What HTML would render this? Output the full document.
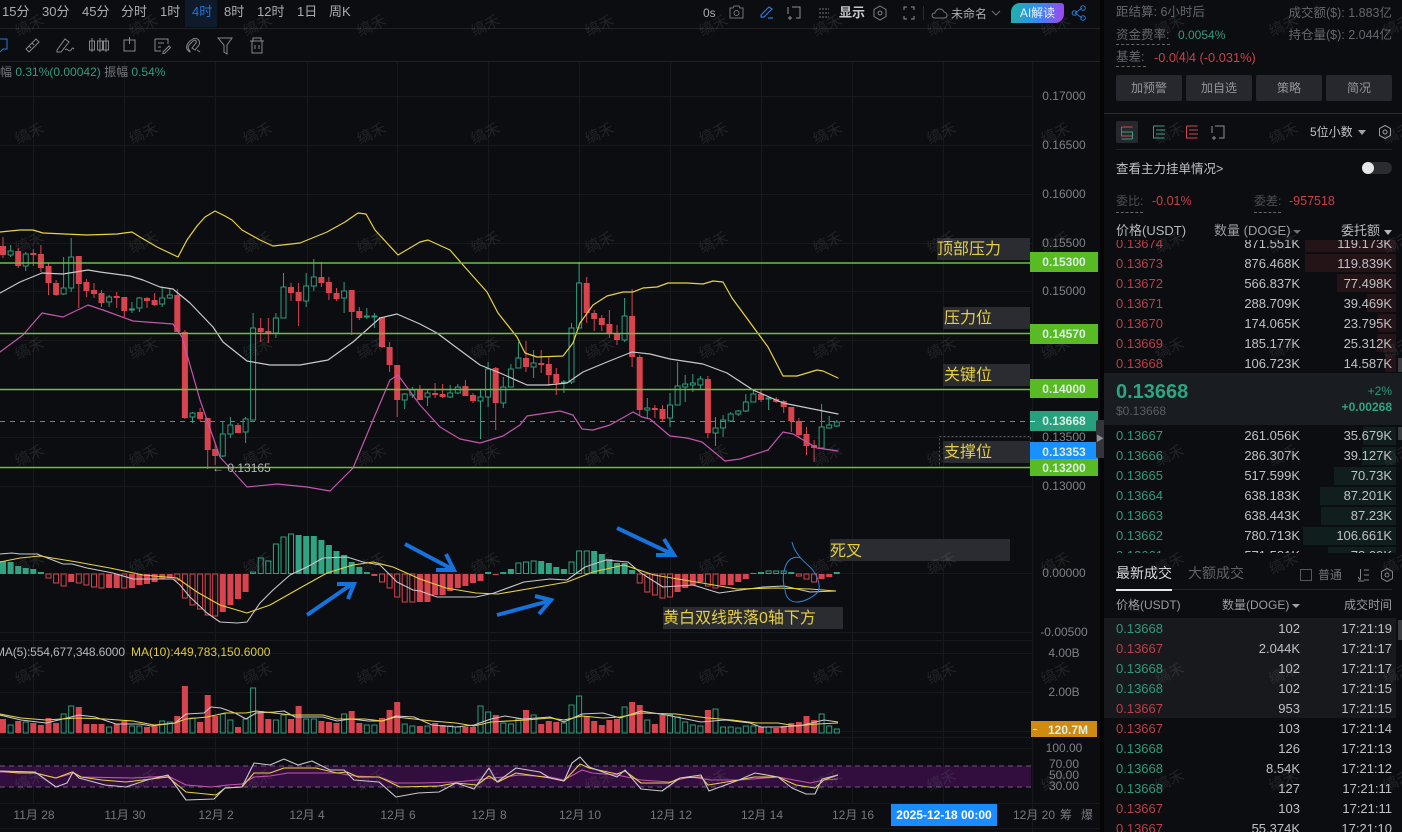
<!DOCTYPE html>
<html lang="zh"><head><meta charset="utf-8"><title>DOGE</title>
<style>
*{box-sizing:border-box}
html,body{margin:0;padding:0;background:#0c0d10}
body{width:1402px;height:832px;overflow:hidden;position:relative;font-family:"Liberation Sans","Noto Sans CJK SC",sans-serif;color:#a8abb0;font-size:12px}
.a{position:absolute;white-space:nowrap}
.tf{position:absolute;top:3px;font-size:13px;line-height:18px;color:#a9acb1}
.btn{position:absolute;top:75px;width:66px;height:26px;background:#26282d;border-radius:2px;text-align:center;line-height:27px;color:#92959a;font-size:12px}
.box{position:absolute;overflow:hidden;left:1104px;width:292px}
.row{position:absolute;left:12px;width:276px;height:20px;line-height:20px;font-size:13px;color:#bfc2c6}
.row span{position:absolute;top:1px}
.p{left:0}.q{right:92px}.t{right:0}
.g{color:#2f9a7c}.r{color:#b9404a}
.bar{position:absolute;right:0;height:18px}
.bg{background:rgba(47,157,126,.13)}.br{background:rgba(217,68,77,.12)}
.wm{position:absolute;left:15px;display:flex;pointer-events:none}
.wm span{display:block;width:114px;font-size:15px;line-height:16px;color:rgba(140,140,145,.17);transform-origin:14px 8px;transform:rotate(-25deg)}
.dash{position:absolute;height:0;border-top:1px dashed #666}
.lb{font-size:12.5px;line-height:15px;color:#64676c}
</style></head><body>

<svg class="a" style="left:0;top:0" width="1100" height="832" viewBox="0 0 1100 832" font-family="Liberation Sans, Noto Sans CJK SC, sans-serif">
<rect width="1100" height="832" fill="#0c0d10"/>
<path d="M0 28.5H1100M0 61.5H1100" stroke="#1f2125"/>
<!-- grid -->
<path d="M33.5 62V804M124.5 62V804M215.5 62V804M307.5 62V804M397.5 62V804M488.5 62V804M579.5 62V804M670.5 62V804M761.5 62V804M852.5 62V804M943.5 62V804M1032.5 62V832M0 96.5H1032M0 145.5H1032M0 194.5H1032M0 243.5H1032M0 291.5H1032M0 340.5H1032M0 389.5H1032M0 437.5H1032M0 486.5H1032M0 573.5H1032M0 632.5H1032M0 640.5H1032M0 653.5H1032M0 692.5H1032M0 731.5H1032M0 737.5H1032M0 748.5H1032M0 803.5H1100" stroke="#17191c" fill="none"/>

<!-- label boxes -->
<g fill="#2b2c31">
<rect x="937" y="238" width="93" height="22"/><rect x="943" y="307" width="87" height="22"/><rect x="943" y="364" width="87" height="22"/><rect x="943" y="441" width="87" height="22"/><rect x="830" y="539" width="180" height="22"/><rect x="663" y="607" width="180" height="22"/>
</g>
<rect x="939.5" y="436.5" width="91" height="31" fill="none" stroke="#55575c" stroke-dasharray="2 2"/>

<!-- candle wicks -->
<g fill="none" stroke-width="1">
<path stroke="#d9434e" d="M3 237V258M18.2 248V268M33.3 249V266M40.9 245V272M48.5 263V295M56.1 280V296M78.8 256V308M86.4 279V297M94 283V298M101.5 290V307M116.7 292V308M124.3 297V317M147 297V308M154.6 293V306M177.3 289V332M184.9 330V419M200.1 408V421M207.7 418V469M215.2 443V465M238 423V433M260.7 318V342M268.3 318V343M291 283V301M298.6 283V326M321.4 262V287M328.9 277V300M336.5 288V301M351.7 290V335M359.3 307V320M382 317V348M389.6 342V372M397.2 365V417M419.9 385V400M435.1 383V398M442.6 384V398M465.4 380V396M473 393V403M495.7 367V430M526 341V372M541.2 350V373M548.8 357V386M556.3 368V395M586.7 277V323M594.2 310V331M601.8 315V331M609.4 310V338M617 325V345M632.1 289V367M639.7 355V416M654.9 405V418M662.5 405V422M707.9 376V438M761 390V402M776.2 397V403M783.7 400V413M791.3 407V432M798.9 418V438M806.5 427V455M814.1 440V462"/>
<path stroke="#2e9c7f" d="M10.6 245V257M25.7 252V271M63.6 257V295M71.2 238V292M109.1 295V307M131.9 302V313M139.4 297V312M162.2 287V307M169.8 288V299M192.5 412V423M222.8 421V457M230.4 417V438M245.6 417V443M253.1 313V420M275.9 313V338M283.5 273V318M306.2 273V307M313.8 259V291M344.1 282V313M366.8 308V319M374.4 313V328M404.7 393V409M412.3 387V398M427.5 390V406M450.2 385V398M457.8 384V394M480.5 390V439M488.1 362V407M503.3 377V408M510.9 364V387M518.4 342V368M533.6 350V378M563.9 380V393M571.5 323V384M579.1 262V328M624.6 298V342M647.3 398V418M670 393V427M677.6 362V405M685.2 375V402M692.8 374V392M700.4 376V390M715.5 417V446M723.1 415V437M730.7 412V422M738.3 410V416M745.8 394V412M753.4 390V402M768.6 397V410M821.6 404V448M829.2 416V428M836.8 420V427"/>
</g>
<!-- red bodies -->
<path stroke="#d9434e" stroke-width="6" fill="none" d="M3 246V255M18.2 251V266M33.3 253V255M40.9 254V268M48.5 266V283M56.1 283V295M78.8 256V284M86.4 282V291M94 290V294M101.5 293V303M116.7 296V298M124.3 297V311M147 298V301M154.6 300V305M177.3 295V332M184.9 332V418M200.1 412V419M207.7 418V450M215.2 449V456M238 425V433M260.7 328V332M268.3 331V333M291 287V293M298.6 292V301M321.4 277V283M328.9 282V293M336.5 293V299M351.7 290V312M359.3 311V318M382 317V347M389.6 347V365M397.2 365V400M419.9 390V400M435.1 393V395M442.6 394V397M465.4 386V396M473 395V401M495.7 368V403M526 358V367M541.2 363V365M548.8 364V375M556.3 374V383M586.7 283V313M594.2 313V319M601.8 318V325M609.4 324V333M617 333V340M632.1 316V357M639.7 357V410M654.9 408V410M662.5 409V419M707.9 379V433M761 394V400M776.2 399V402M783.7 401V407M791.3 407V421M798.9 421V435M806.5 434V446M814.1 445V448"/>
<!-- green bodies (hollow) -->
<path stroke="#2e9c7f" stroke-width="1" fill="#0c0d10" d="M8.1 251h5V255h-5zM23.2 254h5V266h-5zM61.1 288h5V294h-5zM68.7 257h5V288h-5zM106.6 297h5V302h-5zM129.4 309h5V310h-5zM136.9 298h5V308h-5zM159.7 298h5V304h-5zM167.3 295h5V298h-5zM190 413h5V417h-5zM220.3 434h5V456h-5zM227.9 425h5V434h-5zM243.1 419h5V432h-5zM250.6 328h5V420h-5zM273.4 318h5V333h-5zM281 287h5V318h-5zM303.7 286h5V301h-5zM311.3 277h5V286h-5zM341.6 291h5V298h-5zM364.3 316h5V317h-5zM371.9 316h5V317h-5zM402.2 394h5V400h-5zM409.8 390h5V395h-5zM425 393h5V397h-5zM447.7 393h5V397h-5zM455.3 387h5V393h-5zM478 397h5V401h-5zM485.6 369h5V397h-5zM500.8 387h5V403h-5zM508.4 369h5V387h-5zM515.9 358h5V368h-5zM531.1 363h5V367h-5zM561.4 382h5V383h-5zM569 328h5V382h-5zM576.6 283h5V328h-5zM622.1 316h5V340h-5zM644.8 408h5V410h-5zM667.5 405h5V418h-5zM675.1 386h5V405h-5zM682.7 384h5V387h-5zM690.3 383h5V385h-5zM697.9 379h5V385h-5zM713 428h5V433h-5zM720.6 420h5V428h-5zM728.2 414h5V421h-5zM735.8 411h5V414h-5zM743.3 402h5V411h-5zM750.9 394h5V402h-5zM766.1 398h5V399h-5zM819.1 427h5V448h-5zM826.7 425h5V428h-5zM834.3 422h5V426h-5z"/>

<!-- Bollinger -->
<g fill="none" stroke-width="1.2" stroke-linejoin="round" stroke-linecap="round">
<path stroke="#e8d23f" d="M0 232L20 230L33 230L43 233L87 235L117 234L132 232L140 237L157 247L178 257L187 240L197 226L205 217L215 211L225 216L232 220L242 230L260 240L273 246L300 243L327 232L345 222L358 213L366 214L375 230L398 255L420 242L428 240L450 250L463 265L487 292L498 313L517 337L525 353L537 357L563 356L573 343L580 323L593 305L607 296L623 292L633 292L643 288L657 287L668 283L687 283L703 284L713 281L723 282L732 298L768 347L783 376L797 376L817 370L823 371L838 378"/>
<path stroke="#c9c9cc" d="M0 293L20 282L42 273L63 274L88 270L100 272L130 276L143 280L160 287L173 289L190 303L213 327L223 342L247 361L270 365L300 365L328 360L353 342L380 318L397 314L420 324L437 333L453 345L480 365L500 373L527 385L547 385L567 383L583 372L607 362L632 352L650 354L670 359L703 364L727 373L753 390L783 403L813 409L838 414"/>
<path stroke="#c455ac" d="M0 352L23 335L42 313L63 317L88 305L103 310L133 321L173 324L182 337L200 400L220 457L247 487L277 484L307 487L330 491L353 468L373 420L390 380L398 375L420 405L440 427L460 439L480 443L503 436L520 425L527 416L540 414L560 411L573 415L582 429L593 430L610 425L633 412L642 417L650 419L670 436L687 438L702 442L725 461L740 459L768 450L783 432L793 434L817 448L838 451"/>
</g>

<!-- level lines -->
<path d="M0 263H1030M0 333.5H1030M0 389.5H1030M0 467.5H1030" stroke="#67c43a" stroke-width="1.5" fill="none"/>
<path d="M0 421.5H1030" stroke="#2aa583" stroke-dasharray="5 5" fill="none"/>
<text x="212" y="472" font-size="12" fill="#b5b7ba">← 0.13165</text>

<!-- MACD -->
<path stroke="#d9434e" stroke-width="6" fill="none" d="M71.2 574V582M109.1 574V588M116.7 574V588M131.9 574V588M139.4 574V585M147 574V584M154.6 574V582M162.2 574V579M169.8 574V578M222.8 574V612M230.4 574V605M238 574V599M245.6 574V592M374.4 574V576M419.9 574V602M427.5 574V602M435.1 574V595M442.6 574V595M450.2 574V591M457.8 574V588M465.4 574V586M473 574V583M480.5 574V581M495.7 574V575M677.6 574V592M685.2 574V588M692.8 574V585M700.4 574V582M723.1 574V585M730.7 574V585M738.3 574V582M745.8 574V579M821.6 574V579M829.2 574V577"/>
<path stroke="#d9434e" fill="none" d="M46 574h5V578h-5zM53.6 574h5V583h-5zM61.1 574h5V586h-5zM76.3 574h5V583h-5zM83.9 574h5V585h-5zM91.5 574h5V587h-5zM99 574h5V588h-5zM121.8 574h5V588h-5zM174.8 574h5V580h-5zM182.4 574h5V598h-5zM190 574h5V605h-5zM197.6 574h5V609h-5zM205.2 574h5V615h-5zM212.7 574h5V616h-5zM379.5 574h5V582h-5zM387.1 574h5V588h-5zM394.7 574h5V597h-5zM402.2 574h5V602h-5zM409.8 574h5V602h-5zM637.2 574h5V583h-5zM644.8 574h5V592h-5zM652.4 574h5V595h-5zM660 574h5V598h-5zM667.5 574h5V597h-5zM705.4 574h5V586h-5zM713 574h5V588h-5zM796.4 574h5V576h-5zM804 574h5V579h-5zM811.6 574h5V582h-5z"/>
<path stroke="#2fa382" stroke-width="6" fill="none" d="M3 574V561M10.6 574V562M18.2 574V566M25.7 574V568M33.3 574V569M40.9 574V572M298.6 574V535M306.2 574V536M313.8 574V536M321.4 574V540M328.9 574V545M336.5 574V551M344.1 574V555M351.7 574V562M359.3 574V567M366.8 574V572M488.1 574V572M503.3 574V572M510.9 574V569M541.2 574V561M548.8 574V563M556.3 574V567M563.9 574V569M594.2 574V551M601.8 574V554M609.4 574V559M617 574V563M624.6 574V563M632.1 574V570M753.4 574V573M761 574V572M791.3 574V572M836.8 574V572"/>
<path stroke="#2fa382" fill="none" d="M250.6 573.5h5V572h-5zM258.2 573.5h5V558h-5zM265.8 573.5h5V561h-5zM273.4 573.5h5V544h-5zM281 573.5h5V537h-5zM288.5 573.5h5V534h-5zM515.9 573.5h5V563h-5zM523.5 573.5h5V562h-5zM531.1 573.5h5V561h-5zM569 573.5h5V562h-5zM576.6 573.5h5V551h-5zM584.2 573.5h5V551h-5zM766.1 573.5h5V571h-5zM773.7 573.5h5V571h-5zM781.2 573.5h5V571h-5z"/>
<g fill="none" stroke-width="1.1" stroke-linejoin="round">
<path stroke="#c9c9cc" d="M0 554L12 553L20 554L37 554L50 559L63 564L72 564L87 568L113 573L133 579L150 579L173 579L180 585L190 597L207 613L220 622L237 623L247 622L260 603L273 590L290 575L307 567L323 558L347 557L363 562L380 565L397 582L413 590L420 591L437 597L476 597L494 593L524 582L550 579L567 580L585 567L606 560L628 562L641 573L663 587L693 585L719 593L763 587L784 586L810 592L836 591"/>
<path stroke="#e8d23f" d="M0 562L20 558L40 556L77 562L110 568L143 575L177 578L197 592L220 605L247 613L270 605L300 588L327 573L353 565L373 562L393 567L420 579L446 588L476 593L498 594L533 588L567 582L593 572L624 565L654 575L702 583L737 589L776 588L810 589L836 591"/>
</g>
<!-- arrows -->
<g fill="none" stroke="#1672dc" stroke-width="4" stroke-linejoin="miter">
<path d="M307 615L352 584M337 584H354L348 599"/>
<path d="M405 544L452 569M436 570H454L446 554"/>
<path d="M497 615L549 601M535 596L551 600L539 614"/>
<path d="M617 528L672 554M656 555H674L664 539"/>
</g>
<path d="M792 542C794 552 802 560 810 567C818 575 821 586 818 592C812 598 803 602 797 602C790 602 786 598 785 590C782 580 783 570 787 563C790 558 796 556 801 558" fill="none" stroke="#2a86dc" stroke-width="1"/>

<!-- Volume -->
<path stroke="#d9434e" stroke-width="6" fill="none" d="M3 733V719M18.2 733V721M33.3 733V723M40.9 733V725M48.5 733V718M56.1 733V723M78.8 733V707M86.4 733V724M94 733V724M101.5 733V724M116.7 733V724M124.3 733V721M147 733V727M154.6 733V726M177.3 733V716M184.9 733V686M200.1 733V722M207.7 733V695M215.2 733V716M238 733V727M260.7 733V711M268.3 733V719M291 733V719M298.6 733V706M321.4 733V721M328.9 733V722M336.5 733V723M351.7 733V711M359.3 733V723M382 733V718M389.6 733V710M397.2 733V702M419.9 733V726M435.1 733V723M442.6 733V725M465.4 733V727M473 733V727M495.7 733V715M526 733V710M541.2 733V724M548.8 733V721M556.3 733V722M586.7 733V716M594.2 733V721M601.8 733V725M609.4 733V720M617 733V719M632.1 733V702M639.7 733V705M654.9 733V724M662.5 733V715M707.9 733V710M761 733V727M776.2 733V728M783.7 733V726M791.3 733V723M798.9 733V722M806.5 733V716M814.1 733V720"/>
<path stroke="#2e9c7f" fill="none" d="M8.1 733V725h5V733zM23.2 733V722h5V733zM61.1 733V714h5V733zM68.7 733V706h5V733zM106.6 733V727h5V733zM129.4 733V726h5V733zM136.9 733V726h5V733zM159.7 733V721h5V733zM167.3 733V722h5V733zM190 733V718h5V733zM220.3 733V714h5V733zM227.9 733V720h5V733zM243.1 733V719h5V733zM250.6 733V688h5V733zM273.4 733V720h5V733zM281 733V715h5V733zM303.7 733V719h5V733zM311.3 733V719h5V733zM341.6 733V714h5V733zM364.3 733V725h5V733zM371.9 733V725h5V733zM402.2 733V724h5V733zM409.8 733V726h5V733zM425 733V726h5V733zM447.7 733V726h5V733zM455.3 733V727h5V733zM478 733V706h5V733zM485.6 733V712h5V733zM500.8 733V723h5V733zM508.4 733V724h5V733zM515.9 733V719h5V733zM531.1 733V715h5V733zM561.4 733V723h5V733zM569 733V705h5V733zM576.6 733V696h5V733zM622.1 733V707h5V733zM644.8 733V720h5V733zM667.5 733V715h5V733zM675.1 733V717h5V733zM682.7 733V722h5V733zM690.3 733V725h5V733zM697.9 733V726h5V733zM713 733V709h5V733zM720.6 733V727h5V733zM728.2 733V727h5V733zM735.8 733V728h5V733zM743.3 733V726h5V733zM750.9 733V726h5V733zM766.1 733V727h5V733zM819.1 733V714h5V733zM826.7 733V726h5V733zM834.3 733V729h5V733z"/>
<g fill="none" stroke-width="1.1" stroke-linejoin="round">
<path stroke="#c9c9cc" d="M0 715L21 720L46 723L67 718L79 715L95 717L116 724L140 724L151 726L175 723L186 714L204 713L211 707L221 708L235 713L246 719L256 713L274 712L284 711L295 717L323 717L337 721L351 719L368 721L382 721L396 716L414 717L432 725L456 727L474 725L491 719L505 716L523 719L550 717L564 722L582 714L603 713L620 718L641 711L666 715L701 722L725 720L750 723L761 727L782 727L803 725L824 720L838 722"/>
<path stroke="#e8d23f" d="M0 714L21 718L46 720L77 718L105 719L133 721L154 725L175 723L186 719L207 717L225 713L246 713L256 711L274 713L291 715L323 715L337 719L365 719L382 721L396 717L432 721L456 723L474 726L491 722L526 720L550 718L564 720L582 716L603 718L620 717L641 713L676 714L708 718L732 720L757 723L778 723L796 726L817 724L838 723"/>
</g>
<text x="-5" y="656" font-size="12" fill="#b5b7ba" textLength="130">MA(5):554,677,348.6000</text>
<text x="131" y="656" font-size="12" fill="#e0cb3c">MA(10):449,783,150.6000</text>

<!-- RSI -->
<rect x="0" y="766" width="1031" height="21" fill="#310e3d"/>
<path d="M0 766H1031M0 787H1031" stroke="#6b5a70" stroke-dasharray="5 4" fill="none"/>
<g fill="none" stroke-width="1.1" stroke-linejoin="round">
<path stroke="#c455ac" d="M0 772L35 773L56 778L74 773L81 777L133 778L168 776L186 785L211 787L228 785L242 784L254 777L270 776L288 773L316 773L337 773L354 776L379 777L396 783L421 783L456 782L477 780L491 778L505 777L519 775L550 777L564 780L582 770L592 773L617 775L641 780L669 782L690 777L711 780L739 780L778 777L810 783L824 780L838 779"/>
<path stroke="#e8d23f" d="M0 771L18 773L35 773L56 778L72 772L81 777L102 780L126 782L168 777L186 792L216 795L225 788L242 787L254 773L270 773L284 768L316 768L337 773L347 772L358 777L379 777L400 787L439 786L456 783L477 785L489 776L498 782L516 773L550 778L564 781L580 764L589 768L617 774L625 771L641 783L669 783L680 778L701 777L708 785L739 780L754 777L778 777L796 785L815 788L824 780L838 775"/>
<path stroke="#c9c9cc" d="M0 771L35 772L56 787L67 783L73 772L79 778L105 785L126 787L147 780L168 775L186 800L214 799L225 788L242 787L254 763L270 765L284 759L298 765L312 761L330 770L344 770L354 780L379 782L396 797L418 793L439 792L456 783L474 789L489 768L497 782L516 768L540 772L550 778L564 781L572 763L580 757L589 767L617 777L625 770L641 789L662 791L680 778L701 775L709 791L739 780L755 773L778 777L792 788L806 794L815 794L822 779L838 775"/>
</g>

<!-- annotation text -->
<g font-size="16" fill="#e6cf3f">
<text x="937" y="254">顶部压力</text><text x="944" y="323">压力位</text><text x="944" y="380">关键位</text><text x="944" y="457">支撑位</text><text x="830" y="556">死叉</text><text x="663" y="623">黄白双线跌落0轴下方</text>
</g>

<!-- axis labels -->
<g font-size="12" fill="#7e8187" text-anchor="middle">
<text x="1064" y="100">0.17000</text><text x="1064" y="149">0.16500</text><text x="1064" y="198">0.16000</text><text x="1064" y="247">0.15500</text><text x="1064" y="295">0.15000</text><text x="1064" y="344">0.14500</text><text x="1064" y="441">0.13500</text><text x="1064" y="490">0.13000</text>
<text x="1064" y="577">0.00000</text><text x="1064" y="636">-0.00500</text><text x="1064" y="657">4.00B</text><text x="1064" y="696">2.00B</text><text x="1064" y="752">100.00</text><text x="1064" y="768">70.00</text><text x="1064" y="779">50.00</text><text x="1064" y="790">30.00</text>
</g>
<!-- price tags -->
<g>
<rect x="1030" y="252" width="68" height="20" fill="#58bb24"/><rect x="1030" y="324" width="68" height="20" fill="#58bb24"/><rect x="1030" y="379" width="68" height="19" fill="#58bb24"/><rect x="1030" y="411" width="68" height="20" fill="#27a07e"/><rect x="1030" y="442" width="68" height="19" fill="#1890ff"/><rect x="1030" y="459" width="68" height="17" fill="#58bb24"/><rect x="1031" y="721" width="66" height="16" fill="#cf8a12"/>
<path d="M1030 421.5h5M1033 729.5h4" stroke="#fff"/>
</g>
<g font-size="12" font-weight="bold" fill="#dcefe4" text-anchor="middle">
<text x="1064" y="266">0.15300</text><text x="1064" y="338">0.14570</text><text x="1064" y="393">0.14000</text><text x="1064" y="425">0.13668</text><text x="1064" y="456">0.13353</text><text x="1064" y="472">0.13200</text><text x="1068" y="734">120.7M</text>
</g>
<!-- time axis -->
<g font-size="12" fill="#74777d" text-anchor="middle">
<text x="34" y="819">11月 28</text><text x="125" y="819">11月 30</text><text x="216" y="819">12月 2</text><text x="307" y="819">12月 4</text><text x="398" y="819">12月 6</text><text x="489" y="819">12月 8</text><text x="580" y="819">12月 10</text><text x="671" y="819">12月 12</text><text x="762" y="819">12月 14</text><text x="853" y="819">12月 16</text><text x="1034" y="819">12月 20</text><text x="1066" y="819">筹</text><text x="1087" y="819">爆</text>
</g>
<rect x="891" y="804" width="106" height="22" fill="#1a8cff"/>
<text x="944" y="819" font-size="12" font-weight="bold" fill="#fff" text-anchor="middle">2025-12-18 00:00</text>
<path d="M0 828.5H1100" stroke="#17191c"/>

<!-- second toolbar icons -->
<g fill="none" stroke="#84878c" stroke-width="1">
<path d="M0 39H7V49H3L0 52" stroke="#2e78d2"/>
<path d="M26 49L36 39L39 42L29 52ZM29 46L31 48M32 43L34 45"/>
<path d="M57 50L65 39L69 42L61 52L57 52ZM65 50C67 47 69 53 71 50S73 48 74 49"/>
<path d="M92 38V52M100 38V52M106 38V52M89.5 41h5v9h-5zM97.5 41h5v9h-5zM103.5 41h5v9h-5z"/>
<path d="M124 40h11v11h-11zM129.5 37v7"/>
<path d="M155 39h13v5M155 39v12h6M158 43h6M158 47h3M163 52l6-6 1.500 1.500-6 6h-1.500z"/>
<path d="M190 52c-5-3-4-7 0-11l3-2c4-2 8 2 6 6l-4 5-3-2 4-5c1-2-1-4-3-2l-3 3c-3 3-2 5 0 7zM197 50l3 2"/>
<path d="M218 38h14l-5 7v9l-3-2v-7z"/>
<path d="M250 41h14M253 41v-3h8v3M252 41v12h10v-12M255 45v4M259 45v4"/>
</g>
<!-- top right icons -->
<g fill="none" stroke="#6f7277" stroke-width="1">
<path d="M730 8h3l1-2h5l1 2h3v10h-13zM736.500 13m-2.500 0a2.500 2.500 0 1 0 5 0a2.500 2.500 0 1 0-5 0"/>
<path stroke="#2a78d6" stroke-width="1.2" d="M761 15l8-8 3 2-8 8h-3zM768 18h5"/>
<path d="M792 7h8v11h-4M788 18h4M790 16v4M788 7v7" stroke="#8e9196"/>
<path d="M819 9h10M819 13h10M819 17h10M819 9h2" stroke-dasharray="2 1"/>
<path d="M880 6l6 3.500v7l-6 3.500-6-3.500v-7zM880 11a2 2 0 1 0 .01 0z" stroke="#7e8186"/>
<path d="M904 10v-3h3M911 7h3v3M914 16v3h-3M907 19h-3v-3" stroke="#8e9196"/>
<path d="M923.500 6v14" stroke="#2a2c30"/>
<path d="M935 18h9c2 0 3-1 3-3s-2-3-3-3c-1-3-5-4-7-2-1 .5-2 2-2 3-2 0-3 1-3 2.500s1.500 2.500 3 2.500z"/>
<path d="M992 11l4 4 4-4"/>
<path stroke="#2a78d6" d="M1075 13l7-5M1075 13l7 5"/>
<circle cx="1074.500" cy="13" r="2.300" stroke="#2a78d6"/><circle cx="1083" cy="8" r="2.300" stroke="#2a78d6"/><circle cx="1083" cy="18" r="2.300" stroke="#2a78d6"/>
</g>
<text x="703" y="17" font-size="12" fill="#a9acb1">0s</text>
<text x="839" y="17" font-size="13" font-weight="bold" fill="#c6c8cc">显示</text>
<text x="951" y="18" font-size="12" fill="#a9acb1">未命名</text>
<text x="0" y="76" font-size="12" fill="#74777d">幅 <tspan fill="#2f9d7e">0.31%(0.00042)</tspan> 振幅 <tspan fill="#2f9d7e">0.54%</tspan></text>
</svg>

<!-- timeframe buttons -->
<div class="a" style="left:185px;top:0;width:32px;height:27px;background:#0f1a2b"></div>
<div class="tf" style="left:2px">15分</div><div class="tf" style="left:42px">30分</div><div class="tf" style="left:82px">45分</div><div class="tf" style="left:121px">分时</div><div class="tf" style="left:160px">1时</div><div class="tf" style="left:192px;color:#2275d8">4时</div><div class="tf" style="left:224px">8时</div><div class="tf" style="left:257px">12时</div><div class="tf" style="left:297px">1日</div><div class="tf" style="left:329px">周K</div>
<div class="a" style="left:1011px;top:3px;width:53px;height:20px;border-radius:9px 3px 9px 0;background:linear-gradient(100deg,#1eb3a6 0%,#2f8df0 50%,#a83ff0 100%);color:#e8f2ff;text-align:center;font-size:12px;line-height:20px">AI解读</div>

<!-- gutter + handle -->
<div class="a" style="left:1100px;top:0;width:4px;height:832px;background:#050506"></div>
<div class="a" style="left:1096px;top:420px;width:8px;height:38px;background:#33353a;border-radius:2px 0 0 2px;color:#8e9196;font-size:8px;line-height:38px;text-align:center">▶</div>

<!-- right panel -->
<div class="a" style="left:1104px;top:0;width:298px;height:832px;background:#0c0d10"></div>
<div class="a lb" style="left:1116px;top:5px">距结算: 6小时后</div>
<div class="a lb" style="right:10px;top:6px">成交额($): 1.883亿</div>
<div class="a lb" style="left:1116px;top:28px">资金费率:</div><div class="a g" style="left:1178px;top:28px;line-height:15px">0.0054%</div>
<div class="a lb" style="right:10px;top:28px">持仓量($): 2.044亿</div>
<div class="dash" style="left:1116px;top:44px;width:54px"></div>
<div class="a lb" style="left:1116px;top:50px">基差:</div><div class="a" style="left:1154px;top:50px;line-height:15px;font-size:12.8px;color:#c8404a">-0.0⑷4 (-0.031%)</div>
<div class="dash" style="left:1116px;top:66px;width:30px"></div>
<div class="btn" style="left:1116px">加预警</div><div class="btn" style="left:1186px">加自选</div><div class="btn" style="left:1256px">策略</div><div class="btn" style="left:1326px">简况</div>
<div class="a" style="left:1104px;top:113px;width:298px;height:1px;background:#2a2c30"></div>
<div class="a" style="left:1116px;top:121px;width:22px;height:22px;background:#26282d;border-radius:2px"></div>
<svg class="a" style="left:1116px;top:121px" width="120" height="22" fill="none" stroke-width="1">
<path d="M5.500 6v9h11M5.500 6h11" stroke="#d9434e"/><path d="M5.500 11h11v7M5.500 18h11" stroke="#2fa382"/>
<path d="M37.500 5v12h11M37.500 5h11M40 9h9M40 13h9" stroke="#2fa382"/>
<path d="M70.500 5v12h11M70.500 5h11M73 9h9M73 13h9" stroke="#d9434e"/>
<path d="M99 5h9v12h-5M96 5v7M96 17h4M98 15v4" stroke="#8e9196"/>
</svg>
<div class="a" style="left:1310px;top:124px;line-height:16px;color:#c0c3c7;font-size:12px">5位小数</div>
<div class="a" style="left:1358px;top:130px;width:0;height:0;border:4px solid transparent;border-top:5px solid #a0a3a8"></div>
<svg class="a" style="left:1378px;top:124px" width="14" height="16" fill="none" stroke="#9a9da2"><path d="M7 1.500l5.500 3v7L7 14.500 1.500 11.500v-7z"/><circle cx="7" cy="8" r="2"/></svg>
<div class="a" style="left:1116px;top:149px;width:276px;height:1px;background:#1f2125"></div>
<div class="a" style="left:1116px;top:161px;line-height:16px;color:#bfc2c6;font-size:12.5px">查看主力挂单情况&gt;</div>
<div class="a" style="left:1362px;top:162px;width:30px;height:12px;border-radius:6px;background:#2a2c30"></div>
<div class="a" style="left:1362px;top:162px;width:12px;height:12px;border-radius:6px;background:#e8e8ea"></div>
<div class="a" style="left:1116px;top:194px;line-height:15px;color:#4b4e53">委比:</div><div class="a" style="left:1152px;top:194px;line-height:15px;color:#c8404a;font-size:12.5px">-0.01%</div>
<div class="a" style="left:1254px;top:194px;line-height:15px;color:#4b4e53">委差:</div><div class="a" style="left:1289px;top:194px;line-height:15px;color:#c8404a;font-size:12.5px">-957518</div>
<div class="dash" style="left:1116px;top:212px;width:27px"></div><div class="dash" style="left:1254px;top:212px;width:27px"></div>
<div class="a" style="left:1116px;top:223px;line-height:16px;font-size:13px;color:#b5b8bc">价格(USDT)</div>
<div class="a" style="left:1214px;top:223px;line-height:16px;font-size:13px;color:#9a9da2">数量 (DOGE)</div>
<div class="a" style="left:1293px;top:230px;border:4px solid transparent;border-top:4px solid #6a6d72"></div>
<div class="a" style="left:1341px;top:223px;line-height:16px;font-size:13px;color:#b5b8bc">委托额</div>
<div class="a" style="left:1384px;top:230px;border:4px solid transparent;border-top:5px solid #b5b8bc"></div>

<!-- asks -->
<div class="box" style="top:240px;height:133px">
<div class="bar br" style="top:-6px;width:91px"></div><div class="bar br" style="top:14px;width:91px"></div><div class="bar br" style="top:34px;width:59px"></div><div class="bar br" style="top:54px;width:29px"></div><div class="bar br" style="top:74px;width:18px"></div><div class="bar br" style="top:94px;width:19px"></div><div class="bar br" style="top:114px;width:11px"></div>
<div class="row" style="top:-7px"><span class="p r">0.13674</span><span class="q">871.551K</span><span class="t">119.173K</span></div>
<div class="row" style="top:13px"><span class="p r">0.13673</span><span class="q">876.468K</span><span class="t">119.839K</span></div>
<div class="row" style="top:33px"><span class="p r">0.13672</span><span class="q">566.837K</span><span class="t">77.498K</span></div>
<div class="row" style="top:53px"><span class="p r">0.13671</span><span class="q">288.709K</span><span class="t">39.469K</span></div>
<div class="row" style="top:73px"><span class="p r">0.13670</span><span class="q">174.065K</span><span class="t">23.795K</span></div>
<div class="row" style="top:93px"><span class="p r">0.13669</span><span class="q">185.177K</span><span class="t">25.312K</span></div>
<div class="row" style="top:113px"><span class="p r">0.13668</span><span class="q">106.723K</span><span class="t">14.587K</span></div>
</div>
<!-- mid price -->
<div class="a" style="left:1104px;top:373px;width:298px;height:52px;background:#191c20"></div>
<div class="a" style="left:1116px;top:379px;font-size:20px;font-weight:bold;line-height:26px;color:#2ba583">0.13668</div>
<div class="a" style="left:1116px;top:403px;line-height:16px;color:#5a5d62">$0.13668</div>
<div class="a" style="right:10px;top:383px;line-height:16px;color:#2a9a7a">+2%</div>
<div class="a" style="right:10px;top:399px;line-height:16px;font-weight:bold;color:#2ba583">+0.00268</div>
<!-- bids -->
<div class="box" style="top:425px;height:128px">
<div class="bar bg" style="top:2px;width:33px"></div><div class="bar bg" style="top:22px;width:34px"></div><div class="bar bg" style="top:42px;width:62px"></div><div class="bar bg" style="top:62px;width:76px"></div><div class="bar bg" style="top:82px;width:75px"></div><div class="bar bg" style="top:102px;width:93px"></div><div class="bar bg" style="top:122px;width:68px"></div>
<div class="row" style="top:0"><span class="p g">0.13667</span><span class="q">261.056K</span><span class="t">35.679K</span></div>
<div class="row" style="top:20px"><span class="p g">0.13666</span><span class="q">286.307K</span><span class="t">39.127K</span></div>
<div class="row" style="top:40px"><span class="p g">0.13665</span><span class="q">517.599K</span><span class="t">70.73K</span></div>
<div class="row" style="top:60px"><span class="p g">0.13664</span><span class="q">638.183K</span><span class="t">87.201K</span></div>
<div class="row" style="top:80px"><span class="p g">0.13663</span><span class="q">638.443K</span><span class="t">87.23K</span></div>
<div class="row" style="top:100px"><span class="p g">0.13662</span><span class="q">780.713K</span><span class="t">106.661K</span></div>
<div class="row" style="top:120px"><span class="p g">0.13661</span><span class="q">571.581K</span><span class="t">78.09K</span></div>
</div>
<div class="a" style="left:1398px;top:358px;width:4px;height:14px;background:#3a3c40"></div>
<div class="a" style="left:1398px;top:427px;width:4px;height:13px;background:#3a3c40"></div>

<!-- trades -->
<div class="a" style="left:1116px;top:564px;font-size:14px;line-height:18px;color:#d6d8dc">最新成交</div>
<div class="a" style="left:1188px;top:564px;font-size:14px;line-height:18px;color:#5e6166">大额成交</div>
<div class="a" style="left:1300px;top:569px;width:12px;height:12px;border:1px solid #55585d"></div>
<div class="a" style="left:1318px;top:567px;line-height:16px;color:#6f7277">普通</div>
<svg class="a" style="left:1356px;top:567px" width="38" height="16" fill="none" stroke="#7e8186"><path d="M4.500 2v10M2 10l2.500 3M2 14h6M8 3h5M8 8h5M8 13h5"/><path d="M31 1.500l5.500 3v7L31 14.500l-5.500-3v-7z"/><circle cx="31" cy="8" r="2"/></svg>
<div class="a" style="left:1116px;top:589px;width:276px;height:1px;background:#26282c"></div>
<div class="a" style="left:1116px;top:589px;width:56px;height:2px;background:#e6e8ea"></div>
<div class="a" style="left:1116px;top:597px;line-height:16px;color:#9a9da2">价格(USDT)</div>
<div class="a" style="left:1222px;top:597px;line-height:16px;color:#9a9da2">数量(DOGE)</div>
<div class="a" style="left:1292px;top:604px;border:4px solid transparent;border-top:4px solid #a0a3a8"></div>
<div class="a" style="right:10px;top:597px;line-height:16px;color:#9a9da2">成交时间</div>
<div class="a" style="left:1104px;top:618px;width:292px;height:100px;background:#17191d"></div>
<div class="a" style="left:1398px;top:620px;width:4px;height:20px;background:#3a3c40"></div>
<div class="box" style="top:618px;height:214px">
<div class="row" style="top:0"><span class="p g">0.13668</span><span class="q">102</span><span class="t">17:21:19</span></div>
<div class="row" style="top:20px"><span class="p r">0.13667</span><span class="q">2.044K</span><span class="t">17:21:17</span></div>
<div class="row" style="top:40px"><span class="p g">0.13668</span><span class="q">102</span><span class="t">17:21:17</span></div>
<div class="row" style="top:60px"><span class="p g">0.13668</span><span class="q">102</span><span class="t">17:21:15</span></div>
<div class="row" style="top:80px"><span class="p r">0.13667</span><span class="q">953</span><span class="t">17:21:15</span></div>
<div class="row" style="top:100px"><span class="p r">0.13667</span><span class="q">103</span><span class="t">17:21:14</span></div>
<div class="row" style="top:120px"><span class="p g">0.13668</span><span class="q">126</span><span class="t">17:21:13</span></div>
<div class="row" style="top:140px"><span class="p g">0.13668</span><span class="q">8.54K</span><span class="t">17:21:12</span></div>
<div class="row" style="top:160px"><span class="p g">0.13668</span><span class="q">127</span><span class="t">17:21:11</span></div>
<div class="row" style="top:180px"><span class="p r">0.13667</span><span class="q">103</span><span class="t">17:21:11</span></div>
<div class="row" style="top:200px"><span class="p r">0.13667</span><span class="q">55.374K</span><span class="t">17:21:10</span></div>
</div>

<!-- watermarks -->
<div class="wm" style="top:19px"><span>缟禾</span><span>缟禾</span><span>缟禾</span><span>缟禾</span><span>缟禾</span><span>缟禾</span><span>缟禾</span><span>缟禾</span><span>缟禾</span><span>缟禾</span><span>缟禾</span><span>缟禾</span><span>缟禾</span></div>
<div class="wm" style="top:127px"><span>缟禾</span><span>缟禾</span><span>缟禾</span><span>缟禾</span><span>缟禾</span><span>缟禾</span><span>缟禾</span><span>缟禾</span><span>缟禾</span><span>缟禾</span><span>缟禾</span><span>缟禾</span><span>缟禾</span></div>
<div class="wm" style="top:236px"><span>缟禾</span><span>缟禾</span><span>缟禾</span><span>缟禾</span><span>缟禾</span><span>缟禾</span><span>缟禾</span><span>缟禾</span><span>缟禾</span><span>缟禾</span><span>缟禾</span><span>缟禾</span><span>缟禾</span></div>
<div class="wm" style="top:342px"><span>缟禾</span><span>缟禾</span><span>缟禾</span><span>缟禾</span><span>缟禾</span><span>缟禾</span><span>缟禾</span><span>缟禾</span><span>缟禾</span><span>缟禾</span><span>缟禾</span><span>缟禾</span><span>缟禾</span></div>
<div class="wm" style="top:449px"><span>缟禾</span><span>缟禾</span><span>缟禾</span><span>缟禾</span><span>缟禾</span><span>缟禾</span><span>缟禾</span><span>缟禾</span><span>缟禾</span><span>缟禾</span><span>缟禾</span><span>缟禾</span><span>缟禾</span></div>
<div class="wm" style="top:557px"><span>缟禾</span><span>缟禾</span><span>缟禾</span><span>缟禾</span><span>缟禾</span><span>缟禾</span><span>缟禾</span><span>缟禾</span><span>缟禾</span><span>缟禾</span><span>缟禾</span><span>缟禾</span><span>缟禾</span></div>
<div class="wm" style="top:667px"><span>缟禾</span><span>缟禾</span><span>缟禾</span><span>缟禾</span><span>缟禾</span><span>缟禾</span><span>缟禾</span><span>缟禾</span><span>缟禾</span><span>缟禾</span><span>缟禾</span><span>缟禾</span><span>缟禾</span></div>
<div class="wm" style="top:774px"><span>缟禾</span><span>缟禾</span><span>缟禾</span><span>缟禾</span><span>缟禾</span><span>缟禾</span><span>缟禾</span><span>缟禾</span><span>缟禾</span><span>缟禾</span><span>缟禾</span><span>缟禾</span><span>缟禾</span></div>
</body></html>
